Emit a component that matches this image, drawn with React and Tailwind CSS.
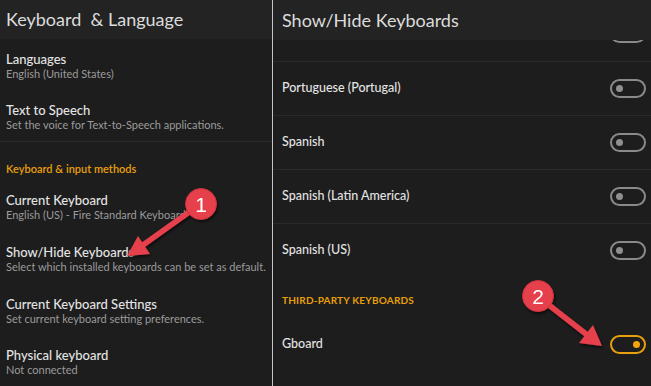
const FONT = { fontFamily: 'Lato, "Open Sans", sans-serif' }

const LEFT_ROWS = [
  { title: "Current Keyboard", sub: "English (US) - Fire Standard Keyboard" },
  { title: "Show/Hide Keyboards", sub: "Select which installed keyboards can be set as default." },
  { title: "Current Keyboard Settings", sub: "Set current keyboard setting preferences." },
  { title: "Physical keyboard", sub: "Not connected" },
]

const KEYBOARDS = ["Portuguese (Portugal)", "Spanish", "Spanish (Latin America)", "Spanish (US)"]

function Toggle({ on = false }) {
  return (
    <span
      className={`flex h-[19px] w-[36px] shrink-0 items-center rounded-full border-2 px-[4px] ${
        on ? "justify-end border-[#e89f0c]" : "justify-start border-[#8a8a8a]"
      }`}
    >
      <span className={`size-[7px] rounded-full ${on ? "bg-[#f2a40e]" : "bg-[#8f8f8f]"}`} />
    </span>
  )
}

function SettingRow({ title, sub, className = "h-[53px]" }) {
  return (
    <div className={`flex flex-col justify-center px-[6px] pt-[4px] ${className}`}>
      <div className="whitespace-nowrap text-[13px] font-medium leading-[16px] text-[#e4e4e4]">{title}</div>
      <div className="whitespace-nowrap text-[11px] leading-[14px] text-[#9b9b9b]">{sub}</div>
    </div>
  )
}

function Badge({ cx, cy, n }) {
  return (
    <g>
      <circle cx={cx} cy={cy} r="15.5" fill="#e5414b" stroke="#c9323b" strokeWidth="1" />
      <text
        x={cx}
        y={cy + 7.5}
        textAnchor="middle"
        fill="#fff"
        fontSize="21"
        fontFamily='"Liberation Sans", Arial, sans-serif'
      >
        {n}
      </text>
    </g>
  )
}

export default function App() {
  return (
    <div className="relative flex h-[386px] w-[651px] overflow-hidden bg-[#1d1d1d]" style={FONT}>
      {/* Left: Keyboard & Language */}
      <section className="flex w-[272px] shrink-0 flex-col">
        <header className="flex h-10 items-center bg-[#232323] px-[6px] text-[18px] text-[#dcdcdc]">
          Keyboard&nbsp; &amp; Language
        </header>
        <SettingRow title="Languages" sub="English (United States)" className="h-[52px]" />
        <SettingRow title="Text to Speech" sub="Set the voice for Text-to-Speech applications." />
        <div className="h-px bg-[#2a2a2a]" />
        <div className="h-[38px] px-[6px] pt-[19px] text-[11px] font-semibold leading-[16px] text-[#e89f0c]">
          Keyboard &amp; input methods
        </div>
        {LEFT_ROWS.map((r) => (
          <SettingRow key={r.title} {...r} />
        ))}
      </section>

      <div className="w-px shrink-0 bg-[#c4c4c4]" />

      {/* Right: Show/Hide Keyboards */}
      <section className="flex min-w-0 flex-1 flex-col">
        <header className="relative z-10 flex h-10 items-center bg-[#232323] px-[9px] text-[18px] text-[#dcdcdc]">
          Show/Hide Keyboards
        </header>
        <div className="flex h-[21px] justify-end overflow-hidden pr-[5px]">
          <div className="-mt-[16px]">
            <Toggle />
          </div>
        </div>
        {KEYBOARDS.map((k) => (
          <div key={k} className="flex h-[54px] items-center justify-between border-t border-[#2a2a2a] pl-[9px] pr-[5px]">
            <span className="text-[12.5px] font-medium text-[#e4e4e4]">{k}</span>
            <Toggle />
          </div>
        ))}
        <div className="flex h-[46px] items-center px-[9px] text-[10px] font-bold tracking-[0.2px] text-[#e89f0c]">
          THIRD-PARTY KEYBOARDS
        </div>
        <div className="flex h-[42px] items-center justify-between pl-[9px] pr-[5px]">
          <span className="text-[12.5px] font-medium text-[#e4e4e4]">Gboard</span>
          <Toggle on />
        </div>
      </section>

      {/* Annotation arrows */}
      <svg className="pointer-events-none absolute inset-0" width="651" height="386" viewBox="0 0 651 386">
        <defs>
          <filter id="sh" x="-20%" y="-20%" width="140%" height="140%">
            <feDropShadow dx="1" dy="2" stdDeviation="1.5" floodColor="#000" floodOpacity="0.6" />
          </filter>
        </defs>
        <g filter="url(#sh)">
          <line x1="192" y1="210" x2="143" y2="245" stroke="#e5414b" strokeWidth="5.5" strokeLinecap="round" />
          <polygon points="127,256 150,254 138,236" fill="#e5414b" />
          <Badge cx={201} cy={204} n="1" />
        </g>
        <g filter="url(#sh)">
          <line x1="545" y1="302" x2="586" y2="334" stroke="#e5414b" strokeWidth="5.5" strokeLinecap="round" />
          <polygon points="602,346 579,343 593,325" fill="#e5414b" />
          <Badge cx={538} cy={296} n="2" />
        </g>
      </svg>
    </div>
  )
}
